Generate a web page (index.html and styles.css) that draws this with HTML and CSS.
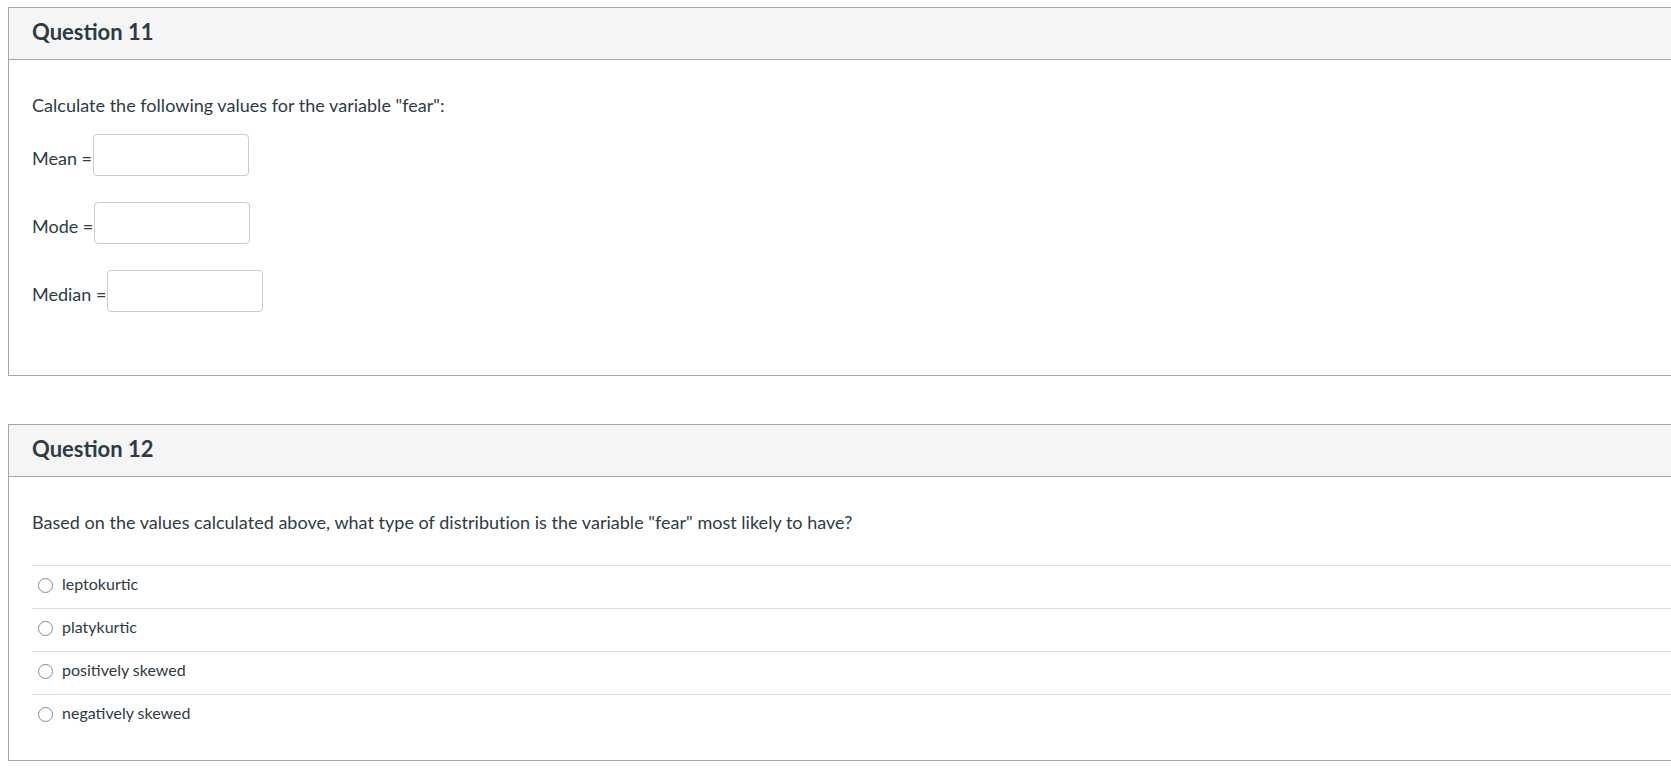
FILE: index.html
```html
<!DOCTYPE html>
<html lang="en">
<head>
<meta charset="utf-8">
<title>Quiz</title>
<link rel="stylesheet" href="styles.css">
</head>
<body>
<div class="page">
  <section class="question">
    <div class="q-header"><h2 class="q-title">Question 11</h2></div>
    <div class="q-body">
      <p class="q-text">Calculate the following values for the variable "fear":</p>
      <div class="fields">
        <label class="field"><span class="field-label">Mean =</span><input class="field-input" type="text"></label>
        <label class="field"><span class="field-label">Mode =</span><input class="field-input" type="text"></label>
        <label class="field"><span class="field-label">Median =</span><input class="field-input" type="text"></label>
      </div>
    </div>
  </section>

  <section class="question">
    <div class="q-header"><h2 class="q-title">Question 12</h2></div>
    <div class="q-body q-body-choice">
      <p class="q-text">Based on the values calculated above, what type of distribution is the variable "fear" most likely to have?</p>
      <div class="answers">
        <label class="answer"><input class="radio" type="radio" name="q12"><span class="answer-text">leptokurtic</span></label>
        <label class="answer"><input class="radio" type="radio" name="q12"><span class="answer-text">platykurtic</span></label>
        <label class="answer"><input class="radio" type="radio" name="q12"><span class="answer-text">positively skewed</span></label>
        <label class="answer"><input class="radio" type="radio" name="q12"><span class="answer-text">negatively skewed</span></label>
      </div>
    </div>
  </section>
</div>
</body>
</html>
```

FILE: styles.css
```css
html, body {
  margin: 0;
  padding: 0;
  overflow: hidden;
  background: #ffffff;
}

body {
  font-family: Lato, "Open Sans", "Liberation Sans", sans-serif;
  color: #2d3b45;
}

.page {
  padding: 7px 0 0 8px;
  margin-right: -40px;
  display: flex;
  flex-direction: column;
  gap: 48px;
}

.question {
  border: 1px solid #a5a5a5;
  background: #ffffff;
}

.q-header {
  background: #f5f5f5;
  border-bottom: 1px solid #a5a5a5;
  height: 51px;
  padding: 0 0 0 23px;
}

.q-title {
  margin: 0;
  padding-top: 11px;
  font-size: 22px;
  line-height: 26px;
  font-weight: 700;
  color: #2d3b45;
}

.q-body {
  padding: 32px 0 63px 23px;
}

.q-text {
  margin: 0;
  font-size: 18px;
  line-height: 27px;
  letter-spacing: 0.02px;
}

.fields {
  margin-top: 15px;
  display: flex;
  flex-direction: column;
  gap: 26px;
}

.field {
  display: flex;
  align-items: flex-start;
  height: 42px;
}

.field-label {
  font-size: 18px;
  line-height: 27px;
  padding-top: 11px;
  white-space: pre;
}

.field-input {
  box-sizing: border-box;
  width: 156px;
  height: 42px;
  margin: 0 0 0 1px;
  border: 1px solid #c7cdd1;
  border-radius: 4px;
  background: #ffffff;
  font: inherit;
}

.q-body-choice {
  padding-bottom: 23px;
}

.answers {
  margin-top: 29px;
  display: flex;
  flex-direction: column;
}

.answer {
  display: flex;
  align-items: flex-start;
  height: 42px;
  border-top: 1px solid #dcdcdc;
  padding-left: 6px;
}

.radio {
  appearance: none;
  -webkit-appearance: none;
  box-sizing: border-box;
  width: 15px;
  height: 15px;
  margin: 12px 9px 0 0;
  border: 1.5px solid #8a8a8a;
  border-radius: 50%;
  background: #ffffff;
}

.answer-text {
  font-size: 16px;
  line-height: 24px;
  padding-top: 6px;
}
```
